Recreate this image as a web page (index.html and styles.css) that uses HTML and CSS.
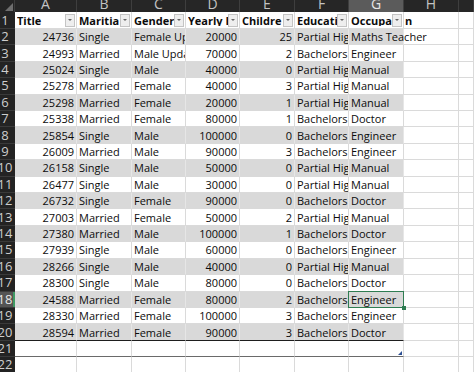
FILE: index.html
```html
<!DOCTYPE html>
<html lang="en">
<head>
<meta charset="utf-8">
<title>Sheet</title>
<link rel="stylesheet" href="styles.css">
</head>
<body>
<div class="sheet">
  <div class="row">
    <div class="corner"><span class="tri"></span></div>
    <div class="ch">A</div><div class="ch">B</div><div class="ch">C</div><div class="ch">D</div><div class="ch">E</div><div class="ch">F</div><div class="ch on">G</div><div class="ch">H</div><div class="ch"></div>
  </div>
  <div class="row">
    <div class="rh">1</div>
    <div class="c th"><span class="lbl">Title</span><span class="flt"></span></div>
    <div class="c th"><span class="lbl">Maritia</span><span class="flt"></span></div>
    <div class="c th"><span class="lbl">Gender</span><span class="flt"></span></div>
    <div class="c th"><span class="lbl">Yearly I</span><span class="flt"></span></div>
    <div class="c th"><span class="lbl">Childre</span><span class="flt"></span></div>
    <div class="c th"><span class="lbl">Educati</span><span class="flt"></span></div>
    <div class="c th"><span class="lbl">Occupa</span><span class="flt"></span></div>
    <div class="c th tail">n</div>
    <div class="c"></div>
  </div>
  <div class="row band">
    <div class="rh">2</div>
    <div class="c n">24736</div><div class="c">Single</div><div class="c">Female Up</div><div class="c n">20000</div><div class="c n">25</div><div class="c">Partial Hig</div><div class="c vis">Maths Teacher</div><div class="c"></div><div class="c"></div>
  </div>
  <div class="row">
    <div class="rh">3</div>
    <div class="c n">24993</div><div class="c">Married</div><div class="c">Male Upda</div><div class="c n">70000</div><div class="c n">2</div><div class="c">Bachelors</div><div class="c">Engineer</div><div class="c"></div><div class="c"></div>
  </div>
  <div class="row band">
    <div class="rh">4</div>
    <div class="c n">25024</div><div class="c">Single</div><div class="c">Male</div><div class="c n">40000</div><div class="c n">0</div><div class="c">Partial Hig</div><div class="c">Manual</div><div class="c"></div><div class="c"></div>
  </div>
  <div class="row">
    <div class="rh">5</div>
    <div class="c n">25278</div><div class="c">Married</div><div class="c">Female</div><div class="c n">40000</div><div class="c n">3</div><div class="c">Partial Hig</div><div class="c">Manual</div><div class="c"></div><div class="c"></div>
  </div>
  <div class="row band">
    <div class="rh">6</div>
    <div class="c n">25298</div><div class="c">Married</div><div class="c">Female</div><div class="c n">20000</div><div class="c n">1</div><div class="c">Partial Hig</div><div class="c">Manual</div><div class="c"></div><div class="c"></div>
  </div>
  <div class="row">
    <div class="rh">7</div>
    <div class="c n">25338</div><div class="c">Married</div><div class="c">Female</div><div class="c n">80000</div><div class="c n">1</div><div class="c">Bachelors</div><div class="c">Doctor</div><div class="c"></div><div class="c"></div>
  </div>
  <div class="row band">
    <div class="rh">8</div>
    <div class="c n">25854</div><div class="c">Single</div><div class="c">Male</div><div class="c n">100000</div><div class="c n">0</div><div class="c">Bachelors</div><div class="c">Engineer</div><div class="c"></div><div class="c"></div>
  </div>
  <div class="row">
    <div class="rh">9</div>
    <div class="c n">26009</div><div class="c">Married</div><div class="c">Male</div><div class="c n">90000</div><div class="c n">3</div><div class="c">Bachelors</div><div class="c">Engineer</div><div class="c"></div><div class="c"></div>
  </div>
  <div class="row band">
    <div class="rh">10</div>
    <div class="c n">26158</div><div class="c">Single</div><div class="c">Male</div><div class="c n">50000</div><div class="c n">0</div><div class="c">Partial Hig</div><div class="c">Manual</div><div class="c"></div><div class="c"></div>
  </div>
  <div class="row">
    <div class="rh">11</div>
    <div class="c n">26477</div><div class="c">Single</div><div class="c">Male</div><div class="c n">30000</div><div class="c n">0</div><div class="c">Partial Hig</div><div class="c">Manual</div><div class="c"></div><div class="c"></div>
  </div>
  <div class="row band">
    <div class="rh">12</div>
    <div class="c n">26732</div><div class="c">Single</div><div class="c">Female</div><div class="c n">90000</div><div class="c n">0</div><div class="c">Bachelors</div><div class="c">Doctor</div><div class="c"></div><div class="c"></div>
  </div>
  <div class="row">
    <div class="rh">13</div>
    <div class="c n">27003</div><div class="c">Married</div><div class="c">Female</div><div class="c n">50000</div><div class="c n">2</div><div class="c">Partial Hig</div><div class="c">Manual</div><div class="c"></div><div class="c"></div>
  </div>
  <div class="row band">
    <div class="rh">14</div>
    <div class="c n">27380</div><div class="c">Married</div><div class="c">Male</div><div class="c n">100000</div><div class="c n">1</div><div class="c">Bachelors</div><div class="c">Doctor</div><div class="c"></div><div class="c"></div>
  </div>
  <div class="row">
    <div class="rh">15</div>
    <div class="c n">27939</div><div class="c">Single</div><div class="c">Male</div><div class="c n">60000</div><div class="c n">0</div><div class="c">Bachelors</div><div class="c">Engineer</div><div class="c"></div><div class="c"></div>
  </div>
  <div class="row band">
    <div class="rh">16</div>
    <div class="c n">28266</div><div class="c">Single</div><div class="c">Male</div><div class="c n">40000</div><div class="c n">0</div><div class="c">Partial Hig</div><div class="c">Manual</div><div class="c"></div><div class="c"></div>
  </div>
  <div class="row">
    <div class="rh">17</div>
    <div class="c n">28300</div><div class="c">Single</div><div class="c">Male</div><div class="c n">80000</div><div class="c n">0</div><div class="c">Bachelors</div><div class="c">Doctor</div><div class="c"></div><div class="c"></div>
  </div>
  <div class="row band">
    <div class="rh on">18</div>
    <div class="c n">24588</div><div class="c">Married</div><div class="c">Female</div><div class="c n">80000</div><div class="c n">2</div><div class="c">Bachelors</div><div class="c sel">Engineer</div><div class="c"></div><div class="c"></div>
  </div>
  <div class="row">
    <div class="rh">19</div>
    <div class="c n">28330</div><div class="c">Married</div><div class="c">Female</div><div class="c n">100000</div><div class="c n">3</div><div class="c">Bachelors</div><div class="c">Engineer</div><div class="c"></div><div class="c"></div>
  </div>
  <div class="row band last">
    <div class="rh">20</div>
    <div class="c n">28594</div><div class="c">Married</div><div class="c">Female</div><div class="c n">90000</div><div class="c n">3</div><div class="c">Bachelors</div><div class="c">Doctor</div><div class="c"></div><div class="c"></div>
  </div>
  <div class="row end">
    <div class="rh">21</div>
    <div class="c"></div><div class="c"></div><div class="c"></div><div class="c"></div><div class="c"></div><div class="c"></div><div class="c grip"><span class="rsz"></span></div><div class="c"></div><div class="c"></div>
  </div>
  <div class="row">
    <div class="rh">22</div>
    <div class="c"></div><div class="c"></div><div class="c"></div><div class="c"></div><div class="c"></div><div class="c"></div><div class="c"></div><div class="c"></div><div class="c"></div>
  </div>
</div>
</body>
</html>
```

FILE: styles.css
```css
* { box-sizing: border-box; }
html, body { margin: 0; padding: 0; background: #fff; }
body {
  width: 474px;
  height: 372px;
  overflow: hidden;
  font-family: "Open Sans", "Liberation Sans", sans-serif;
}
.sheet {
  display: grid;
  grid-template-columns: 15px 62px 55px 54px 54px 55px 54px 55px 55px 1fr;
  grid-template-rows: 12px 17px repeat(19, 16.42px) 16px 16px;
  height: 372px;
  font-size: 11px;
  color: #0c0c0c;
}
.row { display: contents; }

/* headers */
.corner {
  background: #242424;
  border-right: 1px solid #3c3c3c;
  display: flex;
  justify-content: flex-end;
  align-items: flex-end;
  padding: 0 1px 1px 0;
}
.tri {
  width: 0;
  height: 0;
  border-left: 8px solid transparent;
  border-bottom: 8px solid #6e6e6e;
}
.ch {
  background: #262626;
  color: #c3c3c3;
  font-size: 14px;
  line-height: 8px;
  text-align: center;
  overflow: hidden;
  border-right: 1px solid #3e3e3e;
}
.ch.on { background: #5b5b5b; color: #e6e6e6; }
.rh {
  background: #232323;
  color: #cdcdcd;
  font-size: 13px;
  line-height: 1;
  display: flex;
  justify-content: center;
  align-items: center;
  padding-right: 5px;
  overflow: hidden;
  white-space: nowrap;
  border-bottom: 1px solid #3a3a3a;
}
.rh.on {
  background: #545454;
  color: #e8e8e8;
  box-shadow: inset -2px 0 0 #3f9a63;
}

/* cells */
.c {
  border-right: 1px solid #dadada;
  border-bottom: 1px solid #dadada;
  white-space: nowrap;
  overflow: hidden;
  padding: 0 2px;
  display: flex;
  align-items: center;
  line-height: 1;
}
.c.n { justify-content: flex-end; padding-right: 2px; }
.c.vis { overflow: visible; }
.band > .c:nth-child(-n+8) { background: #d9d9d9; border-right-color: #e6e6e6; border-bottom-color: #d9d9d9; }
.last > .c:nth-child(-n+8) { border-bottom: 1px solid #1e1e1e; }
.end > .c:nth-child(-n+8) { border-bottom: 1px solid #6a6a6a; }

.th { font-weight: 700; padding: 0 1px 0 2px; }
.th .lbl { flex: 1 1 auto; min-width: 0; overflow: hidden; }
.th.tail { padding-left: 1px; }
.flt {
  flex: none;
  width: 10px;
  height: 13px;
  border: 1px solid #c4c4c4;
  background: #eeeeee;
  display: flex;
  align-items: center;
  justify-content: center;
}
.flt::after {
  content: "";
  width: 0;
  height: 0;
  border-left: 2px solid transparent;
  border-right: 2px solid transparent;
  border-top: 2px solid #666;
}

.sel { position: relative; overflow: visible; }
.sel::after {
  content: "";
  position: absolute;
  left: -1px;
  top: -1px;
  right: -1px;
  bottom: -1px;
  border: 1.5px solid #2f7d52;
}
.sel::before {
  content: "";
  position: absolute;
  right: -3px;
  bottom: -3px;
  width: 4px;
  height: 4px;
  background: #2f7d52;
  z-index: 1;
}

.grip { justify-content: flex-end; align-items: flex-end; padding: 0 1px 1px 0; }
.rsz {
  width: 0;
  height: 0;
  border-left: 4px solid transparent;
  border-bottom: 4px solid #2c4f93;
}
```
